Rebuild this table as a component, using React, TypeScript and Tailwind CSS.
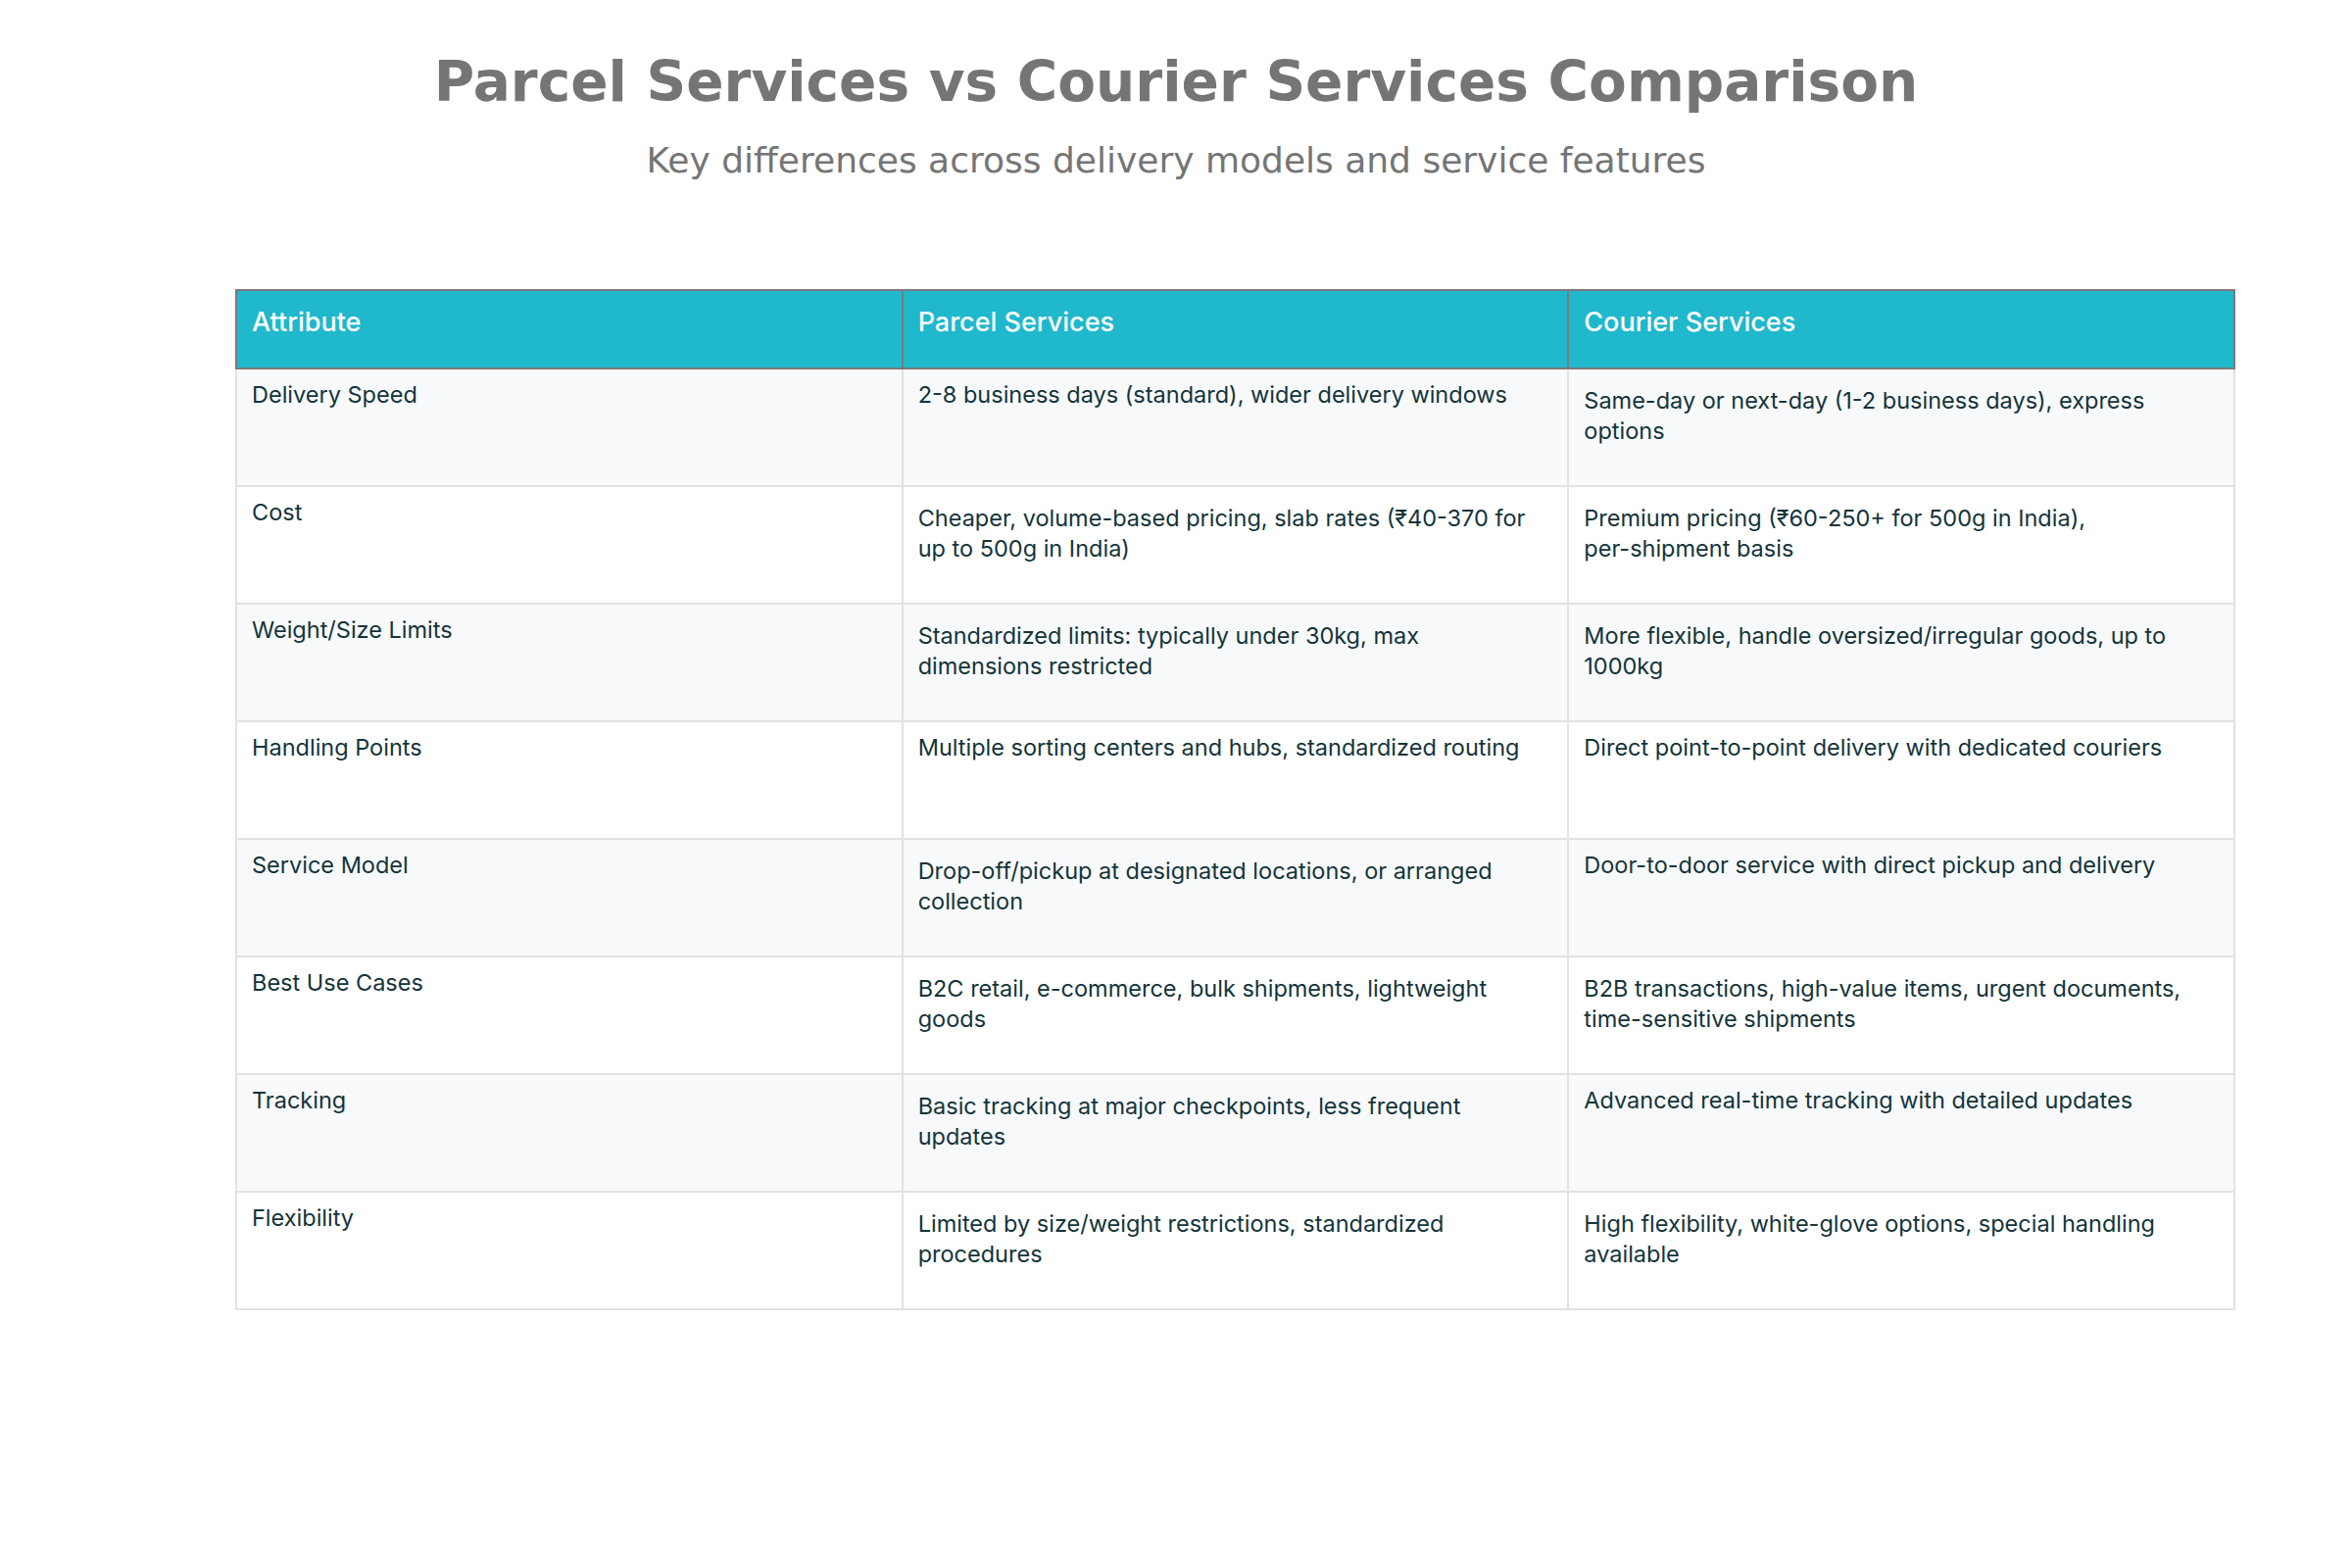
import React from 'react';

// line breaks follow the reference layout
const ROWS: [string, string, string][] = [
  ['Delivery Speed', '2-8 business days (standard), wider delivery windows', 'Same-day or next-day (1-2 business days), express\noptions'],
  ['Cost', 'Cheaper, volume-based pricing, slab rates (₹40-370 for\nup to 500g in India)', 'Premium pricing (₹60-250+ for 500g in India),\nper-shipment basis'],
  ['Weight/Size Limits', 'Standardized limits: typically under 30kg, max\ndimensions restricted', 'More flexible, handle oversized/irregular goods, up to\n1000kg'],
  ['Handling Points', 'Multiple sorting centers and hubs, standardized routing', 'Direct point-to-point delivery with dedicated couriers'],
  ['Service Model', 'Drop-off/pickup at designated locations, or arranged\ncollection', 'Door-to-door service with direct pickup and delivery'],
  ['Best Use Cases', 'B2C retail, e-commerce, bulk shipments, lightweight\ngoods', 'B2B transactions, high-value items, urgent documents,\ntime-sensitive shipments'],
  ['Tracking', 'Basic tracking at major checkpoints, less frequent\nupdates', 'Advanced real-time tracking with detailed updates'],
  ['Flexibility', 'Limited by size/weight restrictions, standardized\nprocedures', 'High flexibility, white-glove options, special handling\navailable'],
];

const HEADERS = ['Attribute', 'Parcel Services', 'Courier Services'];

export default function App() {
  return (
    <div className="w-[2400px] h-[1600px] bg-white">
      {/* heading */}
      <div className="pt-[44px] flex flex-col items-center font-['DejaVu_Sans',sans-serif] text-[#757575]">
        <h1 className="text-[56.5px] leading-[80px] font-bold">Parcel Services vs Courier Services Comparison</h1>
        <p className="mt-[20px] text-[36px] leading-[40px]">Key differences across delivery models and service features</p>
      </div>

      <div className="mt-[111px] ml-[240px] w-[2041px] font-['Inter',sans-serif]">
        <table className="w-full table-fixed border-collapse">
          <thead>
            <tr className="bg-[#1fb8cd]">
              {HEADERS.map((h) => (
                <th
                  key={h}
                  className="h-[80px] border-2 border-[#7a7a7a] px-[15px] pt-[17px] pb-[29px] text-left align-top text-[27px] leading-[30px] font-medium text-white"
                >
                  {h}
                </th>
              ))}
            </tr>
          </thead>
          <tbody>
            {ROWS.map((r, i) => (
              <tr key={r[0]} className={i % 2 === 0 ? 'bg-[#f8f9fa]' : 'bg-white'}>
                {r.map((c, j) => (
                  <td
                    key={j}
                    className={`h-[120px] border-2 border-[#e2e2e2] px-[15px] align-top whitespace-pre-line text-[23.5px] leading-[31px] text-[#13343b] ${c.includes('\n') ? 'pt-[16px]' : 'pt-[10px]'}`}
                  >
                    {c}
                  </td>
                ))}
              </tr>
            ))}
          </tbody>
        </table>
      </div>
    </div>
  );
}
